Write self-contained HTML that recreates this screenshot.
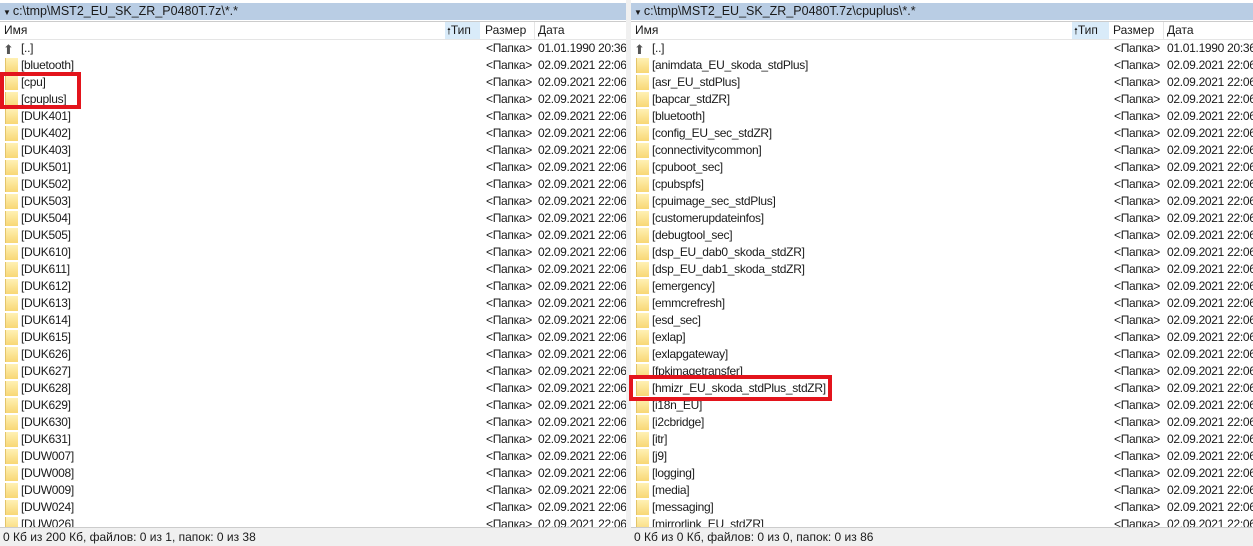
<!DOCTYPE html><html><head><meta charset="utf-8"><style>
body{margin:0;width:1253px;height:546px;background:#f0f0f0;position:relative;overflow:hidden;font-family:"Liberation Sans","DejaVu Sans",sans-serif;font-size:12px;color:#1a1a1a}
.p{position:absolute;top:0;height:546px;background:#fff;overflow:hidden}
.t{position:absolute;left:0;right:0;top:3px;height:17px;background:#b9cde4;line-height:17px;padding-left:3px;white-space:nowrap;font-size:12.5px}
.t b{font-size:8px;font-weight:normal;margin-right:2px}
.h{position:absolute;left:0;right:0;top:21px;height:17px;background:#fff;border-top:1px solid #ccc;border-bottom:1px solid #e5e5e5;line-height:17px}
.h span{position:absolute;top:0;height:17px}
.r{position:absolute;left:0;right:0;height:17px;line-height:17px;white-space:nowrap;letter-spacing:-0.3px}
.r .n{position:absolute;left:21px}
.r .f{position:absolute;left:5px;top:1px;width:13px;height:15px;box-sizing:border-box;border-left:1px solid #e3c46a;background:linear-gradient(#fff1b4,#f8d775)}
.r .u{position:absolute;left:3px;top:1px;font-size:13px;color:#555}
.r .k{position:absolute}
.r .d{position:absolute}
.s{position:absolute;left:0;right:0;top:527px;height:19px;background:#f0f0f0;border-top:1px solid #ccc;line-height:19px;padding-left:3px}
.red{position:absolute;border:4px solid #e3141c;box-sizing:border-box}
</style></head><body>
<div class="p" style="left:0;width:626px">
<div class="t"><b>▼</b>c:\tmp\MST2_EU_SK_ZR_P0480T.7z\*.*</div>
<div class="h"><span style="left:4px">Имя</span><span style="left:445px;width:33px;background:#d9ebf9;padding-left:2px"><span style="font-size:9px;position:static">🠕</span>Тип</span><span style="left:485px">Размер</span><span style="left:534px;border-left:1px solid #e5e5e5;padding-left:3px">Дата</span></div>
<div id="L"></div>
<div class="s">0 Кб из 200 Кб, файлов: 0 из 1, папок: 0 из 38</div>
</div>
<div class="p" style="left:631px;width:622px">
<div class="t"><b>▼</b>c:\tmp\MST2_EU_SK_ZR_P0480T.7z\cpuplus\*.*</div>
<div class="h"><span style="left:4px">Имя</span><span style="left:441px;width:35px;background:#d9ebf9;padding-left:2px"><span style="font-size:9px;position:static">🠕</span>Тип</span><span style="left:482px">Размер</span><span style="left:532px;border-left:1px solid #e5e5e5;padding-left:3px">Дата</span></div>
<div id="R"></div>
<div class="s">0 Кб из 0 Кб, файлов: 0 из 0, папок: 0 из 86</div>
</div>
<div class="red" style="left:0;top:72px;width:81px;height:37px"></div>
<div class="red" style="left:629px;top:375px;width:203px;height:26px"></div>
<script>
function fill(id,names,kx,dx){var h='';names.forEach(function(n,i){var top=40+i*17;var up=n=='..';h+='<div class="r" style="top:'+top+'px">'+(up?'<span class="u">⬆</span>':'<span class="f"></span>')+'<span class="n">['+n+']</span><span class="k" style="left:'+kx+'px">&lt;Папка&gt;</span><span class="d" style="left:'+dx+'px">'+(up?'01.01.1990 20:36':'02.09.2021 22:06')+'</span></div>'});document.getElementById(id).innerHTML=h}
fill('L',['..','bluetooth','cpu','cpuplus','DUK401','DUK402','DUK403','DUK501','DUK502','DUK503','DUK504','DUK505','DUK610','DUK611','DUK612','DUK613','DUK614','DUK615','DUK626','DUK627','DUK628','DUK629','DUK630','DUK631','DUW007','DUW008','DUW009','DUW024','DUW026'],486,538);
fill('R',['..','animdata_EU_skoda_stdPlus','asr_EU_stdPlus','bapcar_stdZR','bluetooth','config_EU_sec_stdZR','connectivitycommon','cpuboot_sec','cpubspfs','cpuimage_sec_stdPlus','customerupdateinfos','debugtool_sec','dsp_EU_dab0_skoda_stdZR','dsp_EU_dab1_skoda_stdZR','emergency','emmcrefresh','esd_sec','exlap','exlapgateway','fpkimagetransfer','hmizr_EU_skoda_stdPlus_stdZR','i18n_EU','i2cbridge','itr','j9','logging','media','messaging','mirrorlink_EU_stdZR'],483,536);
</script>
</body></html>
